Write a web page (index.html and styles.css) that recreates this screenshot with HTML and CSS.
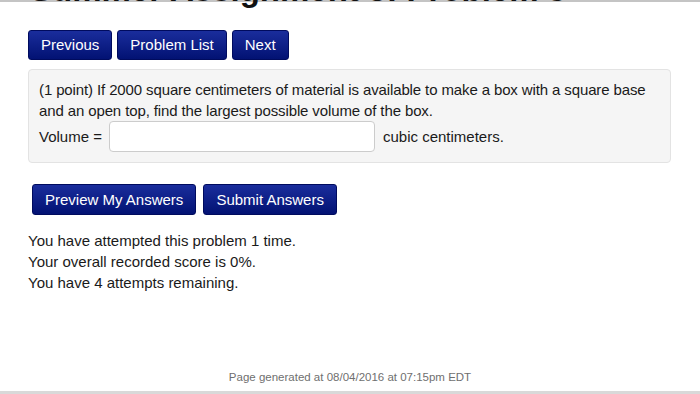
FILE: index.html
```html
<!DOCTYPE html>
<html lang="en">
<head>
<meta charset="utf-8">
<title>Summer Assignment 8: Problem 3</title>
<link rel="stylesheet" href="styles.css">
</head>
<body>
<header class="page-header">
  <h1 class="title">Summer Assignment 8: Problem 3</h1>
</header>
<main class="content">
  <nav class="nav">
    <a class="btn" href="#">Previous</a>
    <a class="btn" href="#">Problem List</a>
    <a class="btn" href="#">Next</a>
  </nav>
  <div class="well">
    <p class="problem">(1 point) If 2000 square centimeters of material is available to make a box with a square base and an open top, find the largest possible volume of the box.</p>
    <div class="answer-row">
      <span class="label">Volume =</span>
      <input class="answer" type="text">
      <span class="unit">cubic centimeters.</span>
    </div>
  </div>
  <div class="actions">
    <button class="btn btn-lg" type="button">Preview My Answers</button>
    <button class="btn btn-lg" type="button">Submit Answers</button>
  </div>
  <div class="status">
    <p>You have attempted this problem 1 time.</p>
    <p>Your overall recorded score is 0%.</p>
    <p>You have 4 attempts remaining.</p>
  </div>
</main>
<footer class="footer">Page generated at 08/04/2016 at 07:15pm EDT</footer>
<div class="bottom-bar"></div>
</body>
</html>
```

FILE: styles.css
```css
html, body {
  margin: 0;
  padding: 0;
  background: #ffffff;
  font-family: "Liberation Sans", Arial, Helvetica, sans-serif;
  color: #1a1a1a;
  overflow: hidden;
  height: 394px;
}

.page-header {
  border-top: 2px solid #c4c4c4;
  height: 8px;
}

.title {
  margin: -29px 0 0 30px;
  font-size: 33px;
  line-height: 33px;
  font-weight: bold;
  color: #111;
  white-space: nowrap;
}

.content {
  padding-left: 28px;
  width: 643px;
}

.nav {
  display: flex;
  gap: 5px;
  margin-top: 20px;
}

.btn {
  display: inline-block;
  box-sizing: border-box;
  height: 30px;
  padding: 0 12px;
  font-family: "Liberation Sans", Arial, Helvetica, sans-serif;
  font-size: 15px;
  line-height: 28px;
  color: #ffffff;
  text-decoration: none;
  background: linear-gradient(#1a2d9c, #021273);
  border: 1px solid #000b5e;
  border-radius: 3px;
}

.well {
  margin-top: 9px;
  box-sizing: border-box;
  width: 643px;
  background: #f5f5f5;
  border: 1px solid #e3e3e3;
  border-radius: 4px;
  padding: 9px 10px 10px 10px;
}

.problem {
  margin: 0;
  font-size: 15px;
  line-height: 21px;
  letter-spacing: -0.12px;
}

.answer-row {
  display: flex;
  align-items: center;
  height: 31px;
  font-size: 15px;
}

.label {
  width: 70px;
}

.answer {
  box-sizing: border-box;
  width: 266px;
  height: 31px;
  border: 1px solid #cccccc;
  border-radius: 4px;
  background: #ffffff;
  margin: 0 8px 0 0;
  padding: 0 6px;
}

.actions {
  display: flex;
  gap: 7px;
  margin-top: 21px;
  padding-left: 4px;
}

.btn-lg {
  height: 31px;
  line-height: 29px;
}

.status {
  margin-top: 15px;
  font-size: 15px;
  line-height: 21px;
}

.status p {
  margin: 0;
}

.footer {
  margin-top: 77px;
  text-align: center;
  font-size: 11.5px;
  line-height: 14px;
  color: #6f6f6f;
}

.bottom-bar {
  margin-top: 7px;
  height: 4px;
  background: #d9d9d9;
}
```
